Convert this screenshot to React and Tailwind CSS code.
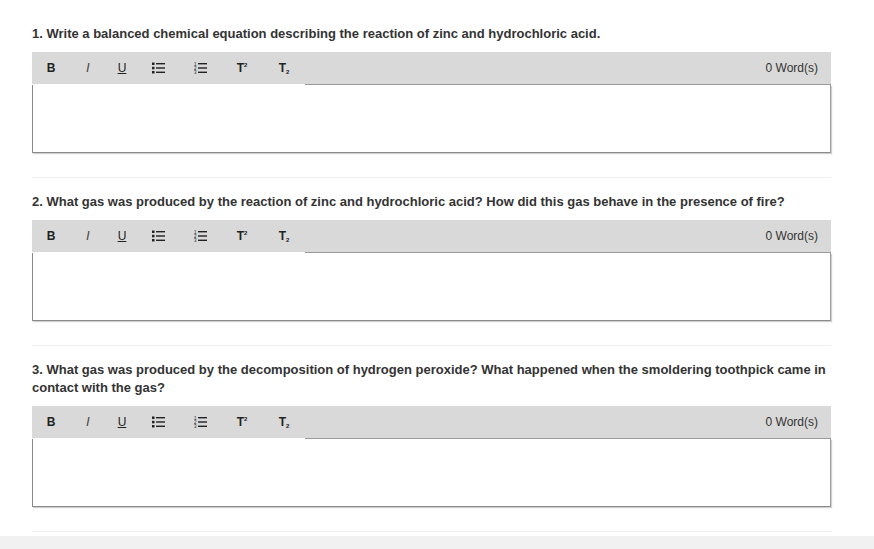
const questions = [
  '1. Write a balanced chemical equation describing the reaction of zinc and hydrochloric acid.',
  '2. What gas was produced by the reaction of zinc and hydrochloric acid? How did this gas behave in the presence of fire?',
  '3. What gas was produced by the decomposition of hydrogen peroxide? What happened when the smoldering toothpick came in contact with the gas?',
];

function BulletIcon() {
  return (
    <svg width="13" height="12" viewBox="0 0 13 12">
      <rect x="0" y="0.5" width="2.5" height="2.5" fill="#222" />
      <rect x="0" y="4.8" width="2.5" height="2.5" fill="#222" />
      <rect x="0" y="9" width="2.5" height="2.5" fill="#222" />
      <rect x="4" y="1" width="9" height="1.4" fill="#222" />
      <rect x="4" y="5.3" width="9" height="1.4" fill="#222" />
      <rect x="4" y="9.6" width="9" height="1.4" fill="#222" />
    </svg>
  );
}

function NumberIcon() {
  return (
    <svg width="13" height="12" viewBox="0 0 13 12">
      <text x="0" y="3.5" fontSize="4.5" fill="#222" fontFamily="Liberation Sans">1</text>
      <text x="0" y="7.8" fontSize="4.5" fill="#222" fontFamily="Liberation Sans">2</text>
      <text x="0" y="12" fontSize="4.5" fill="#222" fontFamily="Liberation Sans">3</text>
      <rect x="4" y="1" width="9" height="1.4" fill="#222" />
      <rect x="4" y="5.3" width="9" height="1.4" fill="#222" />
      <rect x="4" y="9.6" width="9" height="1.4" fill="#222" />
    </svg>
  );
}

function Editor() {
  return (
    <div>
      {/* Toolbar */}
      <div className="h-8 bg-[#d9d9d9] flex items-center justify-between text-[#222]">
        <div className="flex items-center h-full">
          <div className="w-[38px] text-center text-[12px] font-bold">B</div>
          <div className="w-[36px] text-center text-[12px] italic font-['DejaVu_Sans',sans-serif] text-[#444]">I</div>
          <div className="w-[32px] text-center text-[12px] underline">U</div>
          <div className="w-[40px] flex justify-center"><BulletIcon /></div>
          <div className="w-[44px] flex justify-center"><NumberIcon /></div>
          <div className="w-[40px] text-center text-[12px] font-bold">T<span className="relative -top-[5px] text-[6px]">2</span></div>
          <div className="w-[44px] text-center text-[12px] font-bold">T<span className="relative top-[2px] text-[6px]">2</span></div>
        </div>
        <div className="pr-[13px] text-[12px] text-[#333]">0 Word(s)</div>
      </div>
      {/* Text area */}
      <div className="flex h-px">
        <div className="w-[273px] bg-white" />
        <div className="flex-1 bg-[#9a9a9a]" />
      </div>
      <div className="h-[68px] bg-white border-x border-b border-x-[#a0a0a0] border-l-[#8a8a8a] border-b-[#8a8a8a] shadow-[1px_1px_1px_#d0d0d0]" />
    </div>
  );
}

export default function App() {
  return (
    <div className="w-[874px] h-[549px] bg-white flex flex-col font-['Liberation_Sans',Arial,sans-serif] text-[#333] overflow-hidden">
      <div className="flex-1 px-8 pt-6">
        {questions.map((q, i) => (
          <div key={i} className={i === 0 ? 'w-[799px]' : 'w-[799px] pt-[14px]'}>
            <p className="text-[13px] leading-[18px] font-bold pt-px mb-[9px]">{q}</p>
            <Editor />
            <div className="mt-6 h-px bg-[#efefef]" />
          </div>
        ))}
      </div>
      <div className="h-[13px] bg-[#f1f1f1]" />
    </div>
  );
}
